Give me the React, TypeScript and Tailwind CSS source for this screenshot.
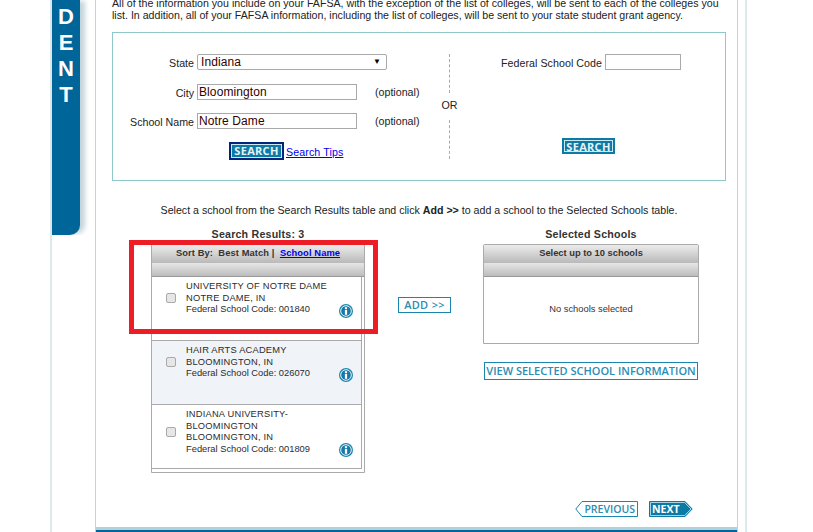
// School search step - FAFSA college selection
function InfoIcon() {
  return (
    <svg width="14" height="14" viewBox="0 0 14 14" className="shrink-0">
      <circle cx="7" cy="7" r="7" fill="#1b86ad" />
      <circle cx="7" cy="7" r="5.3" fill="#1a78a8" stroke="#e6f4f8" strokeWidth="1" />
      <rect x="5.9" y="5.8" width="2.2" height="5" fill="#fff" />
      <rect x="5.9" y="3.2" width="2.2" height="1.8" fill="#fff" />
    </svg>
  );
}

function SchoolRow({ lines, code, shaded }: { lines: string[]; code: string; shaded?: boolean }) {
  return (
    <div className={`h-[64px] border-b border-[#aaaaaa] pt-[4px] ${shaded ? 'bg-[#f0f3f8]' : 'bg-white'}`}>
      <div className="flex items-center">
        <span className="ml-[14px] w-[10px] h-[10px] shrink-0 rounded-[2px] border border-[#a9a9a9] bg-[#e6e6e6]" />
        <div className="ml-[10px] w-[153px] text-[9.33px] leading-[11.5px] text-[#2c2c2c]">
          {lines.map((line) => (
            <div key={line} className="tracking-[0.2px]">
              {line}
            </div>
          ))}
          <div>Federal School Code: {code}</div>
        </div>
        <div className="self-end -mb-[2px]">
          <InfoIcon />
        </div>
      </div>
    </div>
  );
}

const fieldLabel = 'w-[81px] mr-[3px] text-right text-[10.67px] text-[#222222] leading-none pt-[2px] shrink-0';
const fieldInput =
  'h-[16px] border border-[#a9a9a9] bg-white text-[12px] leading-[14px] tracking-[0.1px] text-[#330000] px-px';
const searchButton =
  'bg-[#0d7aa5] font-["Open_Sans",sans-serif] font-bold text-[11px] leading-none text-[#e4f3f8] tracking-[0.3px] shadow-[inset_0_0_0_1px_#cfe8f0] border-2';

export default function App() {
  return (
    <div className='font-["Liberation_Sans",Arial,sans-serif] h-[532px] w-[813px] overflow-hidden bg-white flex relative'>
      {/* Side tab */}
      <div className="w-[95px] shrink-0 flex">
        <div className="ml-[50px] w-[2px] bg-[#dce9ec]" />
        <div className="h-[235px] w-[43px] overflow-hidden">
          <div className="h-[235px] w-[28px] rounded-br-[10px] bg-[#006699] shadow-[6px_0_5px_-1px_#c3d4da] text-white font-bold text-[22px] leading-[26px] text-center pt-[4px]">
            <div>D</div>
            <div>E</div>
            <div>N</div>
            <div>T</div>
          </div>
        </div>
      </div>

      {/* Main panel */}
      <div className="w-[643px] shrink-0 h-[532px] border-x border-[#c3d3da] flex flex-col">
        <div className="flex-1 px-[16px] -mt-[3px]">
          <p className="text-[10.64px] leading-[12px] text-[#222222] w-[614px]">
            All of the information you include on your FAFSA, with the exception of the list of colleges, will be
            sent to each of the colleges you list. In addition, all of your FAFSA information, including the list of
            colleges, will be sent to your state student grant agency.
          </p>

          {/* Search box */}
          <div className="mt-[11px] h-[149px] w-[614px] border border-[#8ec8cc] flex pt-[21px]">
            <div className="w-[315px] shrink-0">
              <div className="flex items-center h-[16px]">
                <span className={fieldLabel}>State</span>
                <div className={`${fieldInput} w-[190px] flex items-center justify-between rounded-[2px] pl-[3px] pr-[2px]`}>
                  <span>Indiana</span>
                  <span className="text-[8px] text-black mr-[3px]">▼</span>
                </div>
              </div>
              <div className="flex items-center h-[16px] mt-[14px]">
                <span className={fieldLabel}>City</span>
                <div className={`${fieldInput} w-[160px]`}>Bloomington</div>
                <span className="ml-[18px] text-[10.67px] text-[#222222]">(optional)</span>
              </div>
              <div className="flex items-center h-[16px] mt-[13px]">
                <span className={fieldLabel}>School Name</span>
                <div className={`${fieldInput} w-[160px]`}>Notre Dame</div>
                <span className="ml-[18px] text-[10.67px] text-[#222222]">(optional)</span>
              </div>
              <div className="flex items-center mt-[12px] ml-[116px]">
                <button className={`${searchButton} border-[#00257a] h-[18px] w-[55px]`}>SEARCH</button>
                <a className="ml-[2px] text-[10.67px] text-[#0000ee] underline mt-[3px] tracking-[0.1px]">Search Tips</a>
              </div>
            </div>

            {/* OR divider */}
            <div className="w-[42px] shrink-0 flex flex-col items-center h-[105px]">
              <div className="h-[39px] border-l border-dashed border-[#aaaaaa]" />
              <div className="flex-1 flex items-center text-[10.67px] text-[#222222] pb-[4px] pl-px">OR</div>
              <div className="h-[39px] border-l border-dashed border-[#aaaaaa]" />
            </div>

            <div className="flex-1 pr-[44px]">
              <div className="flex items-center justify-end h-[16px]">
                <span className="text-[10.67px] text-[#222222] mr-[3px] pt-[2px] tracking-[0.05px]">Federal School Code</span>
                <div className={`${fieldInput} w-[76px]`} />
              </div>
              <div className="mt-[72px] ml-[92px]">
                <button className={`${searchButton} border-[#0d7aa5] h-[16px] w-[53px] -mt-[4px] block`}>SEARCH</button>
              </div>
            </div>
          </div>

          <p className="mt-[23px] w-[614px] text-center text-[10.63px] leading-[12px] text-[#222222]">
            Select a school from the Search Results table and click <b>Add &gt;&gt;</b> to add a school to the Selected
            Schools table.
          </p>

          {/* Results and selection */}
          <div className="mt-[13px] flex items-start">
            <div className="ml-[39px] w-[214px] shrink-0">
              <div className="text-center text-[10.67px] font-bold leading-[12px] text-[#333333] tracking-[0.2px] -mt-px">Search Results: 3</div>
              <div className="mt-[4px] border border-[#aaaaaa] h-[229px] pr-[2px] rounded-t-[2px]">
                <div className="-mr-[2px] h-[18px] bg-gradient-to-b from-[#ececec] to-[#b9b9b9] flex items-center justify-center text-[9.33px] font-bold text-[#333333] tracking-[0.1px]">
                  Sort By:&nbsp; Best Match |&nbsp;&nbsp;<a className="text-[#0000ee] underline">School Name</a>
                </div>
                <div className="-mr-[2px] h-[14px] border-b border-[#999999] bg-gradient-to-b from-[#e6e6e6] to-[#bdbdbd]" />
                <div className="border-r border-[#aaaaaa]">
                  <SchoolRow lines={['UNIVERSITY OF NOTRE DAME', 'NOTRE DAME, IN']} code="001840" />
                  <SchoolRow lines={['HAIR ARTS ACADEMY', 'BLOOMINGTON, IN']} code="026070" shaded />
                  <SchoolRow lines={['INDIANA UNIVERSITY-', 'BLOOMINGTON', 'BLOOMINGTON, IN']} code="001809" />
                </div>
              </div>
            </div>

            <div className="ml-[33px] mt-[68px] h-[16px] w-[53px] shrink-0 border border-[#1b86ad] font-['Open_Sans',sans-serif] font-semibold text-[11px] leading-[14px] text-center text-[#2a8db3] tracking-[0.3px]">
              ADD &gt;&gt;
            </div>

            <div className="ml-[32px] w-[216px] shrink-0">
              <div className="text-center text-[10.67px] font-bold leading-[12px] text-[#333333] tracking-[0.2px] -mt-px">Selected Schools</div>
              <div className="mt-[4px] border border-[#aaaaaa] h-[100px] rounded-t-[2px]">
                <div className="h-[18px] bg-gradient-to-b from-[#ececec] to-[#b9b9b9] flex items-center justify-center text-[9.33px] font-bold text-[#333333]">
                  Select up to 10 schools
                </div>
                <div className="h-[14px] border-b border-[#999999] bg-gradient-to-b from-[#e6e6e6] to-[#bdbdbd]" />
                <div className="h-[66px] flex items-center justify-center text-[9.33px] text-[#333333]">
                  No schools selected
                </div>
              </div>
              <div className="mt-[18px] ml-px h-[18px] w-[214px] border border-[#1b86ad] font-['Open_Sans',sans-serif] font-semibold text-[11px] leading-[16px] text-center text-[#2a8db3]">
                VIEW SELECTED SCHOOL INFORMATION
              </div>
            </div>
          </div>
        </div>

        {/* Prev / next */}
        <div className="flex justify-end items-center h-[16px] mb-[10px] pr-[44px] gap-[11px]">
          <div className="relative h-[16px] w-[63px] font-['Open_Sans',sans-serif] font-semibold text-[10.5px] leading-[16px] text-[#2a8db3] text-right pr-[3px]">
            <svg width="63" height="16" viewBox="0 0 63 16" className="absolute inset-0">
              <path d="M62.5.5H7L.8 8 7 15.5h55.5z" fill="#fff" stroke="#1b86ad" />
            </svg>
            <span className="relative">PREVIOUS</span>
          </div>
          <div className="relative h-[16px] w-[44px] font-['Open_Sans',sans-serif] font-bold text-[10.5px] leading-[16px] text-white pl-[3px]">
            <svg width="44" height="16" viewBox="0 0 44 16" className="absolute inset-0">
              <path d="M.5.5H36L43.2 8 36 15.5H.5z" fill="#0d7aa5" stroke="#0d7aa5" />
              <path d="M1.5 1.5H35.6L42 8l-6.4 6.5H1.5z" fill="none" stroke="#cfe8f0" strokeWidth="0.8" />
            </svg>
            <span className="relative">NEXT</span>
          </div>
        </div>
        <div className="h-[3px] bg-[#b5d0d8]" />
        <div className="h-[2px] bg-[#006699]" />
      </div>

      {/* Right edge strip */}
      <div className="ml-[7px] w-[2px] shrink-0 bg-[#dce9ec]" />

      {/* Red annotation */}
      <div className="absolute left-[129px] top-[240px] w-[249px] h-[94px] border-[5px] border-[#ee1c25]" />
    </div>
  );
}
